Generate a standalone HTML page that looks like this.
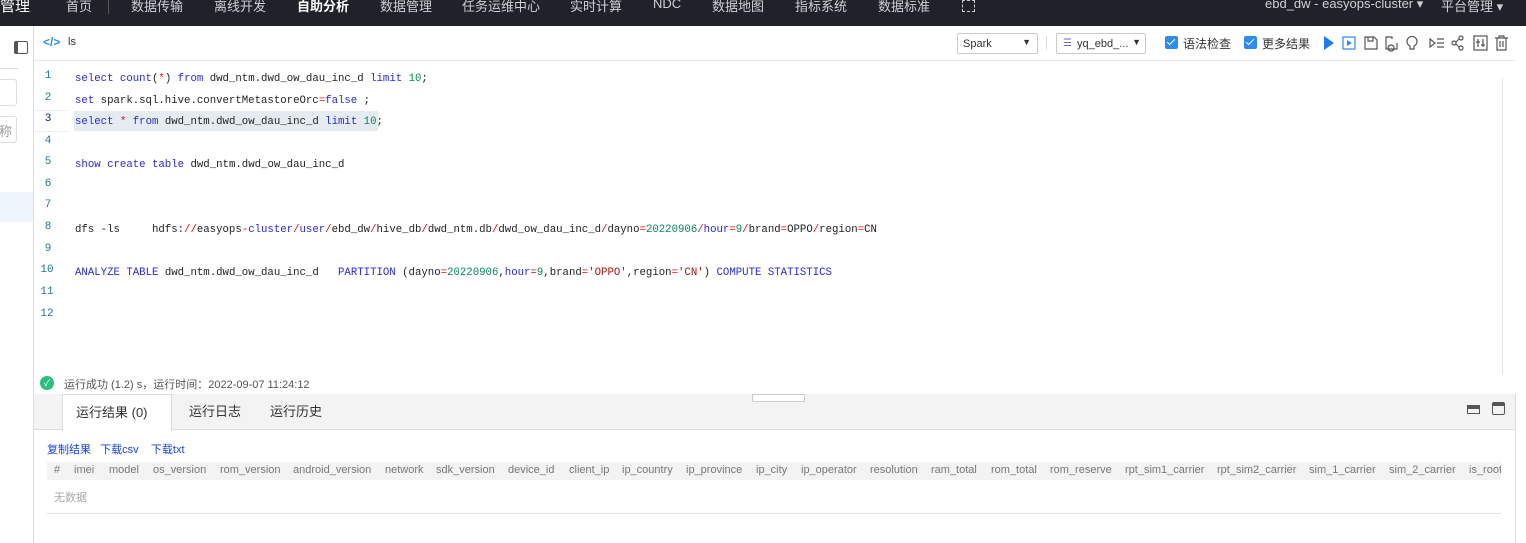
<!DOCTYPE html>
<html><head><meta charset="utf-8"><style>
*{margin:0;padding:0;box-sizing:border-box}
body{width:1526px;height:543px;overflow:hidden;background:#fff;font-family:"Liberation Sans","Noto Sans CJK SC",sans-serif;font-size:12px;color:#333;position:relative}
.abs{position:absolute}
.nav{left:0;top:0;width:1526px;height:26px;background:#1f2229;color:#cfd1d6;font-size:13px}
.nav span{position:absolute;top:-4px;white-space:nowrap}
.code{font-family:"Liberation Mono",monospace;font-size:10.7px;white-space:pre;color:#222}
.ln{position:absolute;left:41px;width:14px;text-align:center;color:#237893;font-family:"Liberation Mono",monospace;font-size:11px}
.kw{color:#2a2ad0}.nm{color:#098658}.op{color:#d11}.st{color:#a31515}
.cb{position:absolute;width:13px;height:13px;background:#2d8cf0;border-radius:2px;top:36px}
.cb:after{content:"";position:absolute;left:4px;top:1px;width:3px;height:7px;border:solid #fff;border-width:0 1.5px 1.5px 0;transform:rotate(45deg)}
.th span{position:absolute;top:2px;color:#777;white-space:nowrap}
</style></head><body>
<div class="abs nav">
<span style="left:0;color:#fff;font-size:15px;top:-5px">管理</span>
<span style="left:66px">首页</span>
<div class="abs" style="left:108px;top:0;width:1px;height:14px;background:#555"></div>
<span style="left:131px">数据传输</span><span style="left:214px">离线开发</span>
<span style="left:297px;color:#fff;font-weight:bold">自助分析</span>
<span style="left:380px">数据管理</span><span style="left:462px">任务运维中心</span>
<span style="left:570px">实时计算</span><span style="left:653px">NDC</span>
<span style="left:712px">数据地图</span><span style="left:795px">指标系统</span><span style="left:878px">数据标准</span>
<div class="abs" style="left:962px;top:0;width:13px;height:12px;border:1px dashed #ccc"></div>
<span style="left:1265px">ebd_dw - easyops-cluster ▾</span>
<span style="left:1441px">平台管理 ▾</span>
</div>
<!-- sidebar -->
<div class="abs" style="left:33px;top:26px;width:1px;height:517px;background:#ddd"></div>
<div class="abs" style="left:14px;top:41px;width:14px;height:13px;border:1.5px solid #555;border-radius:2px;border-left-width:4px"></div>
<div class="abs" style="left:0;top:68px;width:18px;height:1px;background:#ddd"></div>
<div class="abs" style="left:-4px;top:79px;width:21px;height:27px;border:1px solid #ddd;border-radius:3px"></div>
<div class="abs" style="left:-4px;top:116px;width:21px;height:27px;border:1px solid #ddd;border-radius:3px;color:#999;font-size:13px;padding:4px 0 0 2px">称</div>
<div class="abs" style="left:0;top:192px;width:33px;height:30px;background:#eef5fd"></div>
<!-- toolbar -->
<div class="abs" style="left:43px;top:35px;color:#2d8cf0;font-size:12px;font-weight:bold">&lt;/&gt;</div>
<div class="abs" style="left:68px;top:36px;font-size:11px">ls</div>
<div class="abs" style="left:34px;top:60px;width:1481px;height:1px;background:#e8e8e8"></div>
<div class="abs" style="left:957px;top:33px;width:81px;height:21px;border:1px solid #ccc;border-radius:2px;font-size:11px;padding:4px 0 0 5px">Spark<span style="position:absolute;right:6px;top:3px;font-size:9px">▼</span></div>
<div class="abs" style="left:1046px;top:36px;width:1px;height:14px;background:#ddd"></div>
<div class="abs" style="left:1056px;top:33px;width:90px;height:21px;border:1px solid #ccc;border-radius:2px;font-size:11px;padding:4px 0 0 20px"><span style="position:absolute;left:6px;top:4px;color:#7a5fc7;font-size:10px">☰</span>yq_ebd_...<span style="position:absolute;right:4px;top:3px;font-size:9px">▼</span></div>
<div class="cb" style="left:1165px"></div><div class="abs" style="left:1183px;top:35px;font-size:12px">语法检查</div>
<div class="cb" style="left:1244px"></div><div class="abs" style="left:1262px;top:35px;font-size:12px">更多结果</div>
<svg class="abs" style="left:1320px;top:33px" width="200" height="20" fill="none" stroke="#555" stroke-width="1.2">
<path d="M4 3 L14 10 L4 17Z" fill="#1e7ce8" stroke="none"/>
<rect x="23" y="4" width="12" height="12" stroke="#2d8cf0"/><path d="M27 7 L32 10 L27 13Z" fill="#2d8cf0" stroke="none"/>
<path d="M45 4 H54 L57 7 V16 H45Z M48 4 V8 H53 V4"/>
<path d="M72 6 V4 H66 V16 H77 V10 M71 12 a3 3 0 1 0 0.1 0"/>
<path d="M94 13 a5 5 0 1 0 -4 0 V16 H94Z"/>
<path d="M110 6 V14 L115 10Z M117 6 H124 M117 10 H124 M117 14 H124" />
<circle cx="134" cy="10" r="2"/><circle cx="141" cy="5" r="2"/><circle cx="141" cy="15" r="2"/><path d="M136 9 L139 6 M136 11 L139 14"/>
<rect x="154" y="3" width="13" height="14"/><path d="M158 6 V14 M163 6 V14 M156 9 H160 M161 12 H165"/>
<path d="M175 5 H188 M179 5 V3 H184 V5 M177 5 V17 H186 V5 M180 8 V14 M183 8 V14"/>
</svg>
<!-- editor -->
<div class="abs" style="left:34px;top:110px;width:34px;height:22px;border-top:1px solid #eee;border-bottom:1px solid #eee"></div>
<div class="abs" style="left:74px;top:111px;width:304px;height:20px;background:#e5ebf1"></div>
<div class="abs" style="left:1502px;top:78px;width:13px;height:296px;border-left:1px solid #e5e5e5"></div>
<div class="ln" style="top:70px">1</div><div class="ln" style="top:92px">2</div><div class="ln" style="top:113px;color:#0b216f">3</div><div class="ln" style="top:135px">4</div><div class="ln" style="top:156px">5</div><div class="ln" style="top:178px">6</div><div class="ln" style="top:199px">7</div><div class="ln" style="top:221px">8</div><div class="ln" style="top:243px">9</div><div class="ln" style="top:264px;left:38px;width:18px">10</div><div class="ln" style="top:286px;left:38px;width:18px">11</div><div class="ln" style="top:308px;left:38px;width:18px">12</div>
<div class="abs code" style="left:75px;top:69px;line-height:21.6px"><span class="kw">select</span> <span class="kw">count</span>(<span class="op">*</span>) <span class="kw">from</span> dwd_ntm.dwd_ow_dau_inc_d <span class="kw">limit</span> <span class="nm">10</span>;
<span class="kw">set</span> spark.sql.hive.convertMetastoreOrc<span class="op">=</span><span class="kw">false</span> ;
<span class="kw">select</span> <span class="op">*</span> <span class="kw">from</span> dwd_ntm.dwd_ow_dau_inc_d <span class="kw">limit</span> <span class="nm">10</span>;

<span class="kw">show</span> <span class="kw">create</span> <span class="kw">table</span> dwd_ntm.dwd_ow_dau_inc_d


dfs -ls     hdfs:<span class="op">//</span>easyops<span class="op">-</span><span class="kw">cluster</span><span class="op">/</span><span class="kw">user</span><span class="op">/</span>ebd_dw<span class="op">/</span>hive_db<span class="op">/</span>dwd_ntm.db<span class="op">/</span>dwd_ow_dau_inc_d<span class="op">/</span>dayno<span class="op">=</span><span class="nm">20220906</span><span class="op">/</span><span class="kw">hour</span><span class="op">=</span><span class="nm">9</span><span class="op">/</span>brand<span class="op">=</span>OPPO<span class="op">/</span>region<span class="op">=</span>CN

<span class="kw">ANALYZE</span> <span class="kw">TABLE</span> dwd_ntm.dwd_ow_dau_inc_d   <span class="kw">PARTITION</span> (dayno<span class="op">=</span><span class="nm">20220906</span>,<span class="kw">hour</span><span class="op">=</span><span class="nm">9</span>,brand<span class="op">=</span><span class="st">'OPPO'</span>,region<span class="op">=</span><span class="st">'CN'</span>) <span class="kw">COMPUTE</span> <span class="kw">STATISTICS</span></div>
<!-- status -->
<div class="abs" style="left:40px;top:376px;width:14px;height:14px;border-radius:50%;background:#2dbd7e;color:#fff;font-size:9px;text-align:center;line-height:14px">✓</div>
<div class="abs" style="left:64px;top:376px;font-size:11px;color:#555">运行成功 (1.2) s，运行时间：2022-09-07 11:24:12</div>
<div class="abs" style="left:34px;top:394px;width:1481px;height:36px;background:#f3f3f3;border-bottom:1px solid #ddd"></div>
<div class="abs" style="left:752px;top:394px;width:53px;height:8px;border:1px solid #ccc;background:#fff"></div>
<div class="abs" style="left:62px;top:394px;width:110px;height:37px;background:#fff;border:1px solid #ddd;border-bottom:none;font-size:13px;padding:7px 0 0 13px">运行结果 (0)</div>
<div class="abs" style="left:189px;top:401px;font-size:13px">运行日志</div>
<div class="abs" style="left:270px;top:401px;font-size:13px">运行历史</div>
<div class="abs" style="left:1467px;top:405px;width:13px;height:9px;border:1.5px solid #555;border-top-width:4px"></div>
<div class="abs" style="left:1492px;top:402px;width:13px;height:13px;border:1.5px solid #555;border-top-width:4px;border-radius:2px"></div>
<div class="abs" style="left:1515px;top:394px;width:1px;height:149px;background:#ddd"></div>
<div class="abs" style="left:47px;top:441px;font-size:11px;color:#1a44d6">复制结果 &nbsp;&nbsp;下载csv &nbsp;&nbsp;&nbsp;下载txt</div>
<div class="abs th" style="left:47px;top:462px;width:1454px;height:18px;background:#f3f3f3;font-size:11px;overflow:hidden">
<span style="left:7px">#</span><span style="left:27px">imei</span><span style="left:62px">model</span><span style="left:106px">os_version</span><span style="left:173px">rom_version</span><span style="left:246px">android_version</span><span style="left:338px">network</span><span style="left:389px">sdk_version</span><span style="left:461px">device_id</span><span style="left:522px">client_ip</span><span style="left:575px">ip_country</span><span style="left:639px">ip_province</span><span style="left:709px">ip_city</span><span style="left:754px">ip_operator</span><span style="left:823px">resolution</span><span style="left:884px">ram_total</span><span style="left:944px">rom_total</span><span style="left:1003px">rom_reserve</span><span style="left:1078px">rpt_sim1_carrier</span><span style="left:1170px">rpt_sim2_carrier</span><span style="left:1262px">sim_1_carrier</span><span style="left:1342px">sim_2_carrier</span><span style="left:1422px">is_root</span></div>
<div class="abs" style="left:54px;top:489px;font-size:11px;color:#aaa">无数据</div>
<div class="abs" style="left:47px;top:513px;width:1454px;height:1px;background:#e3e3e3"></div>
</body></html>
